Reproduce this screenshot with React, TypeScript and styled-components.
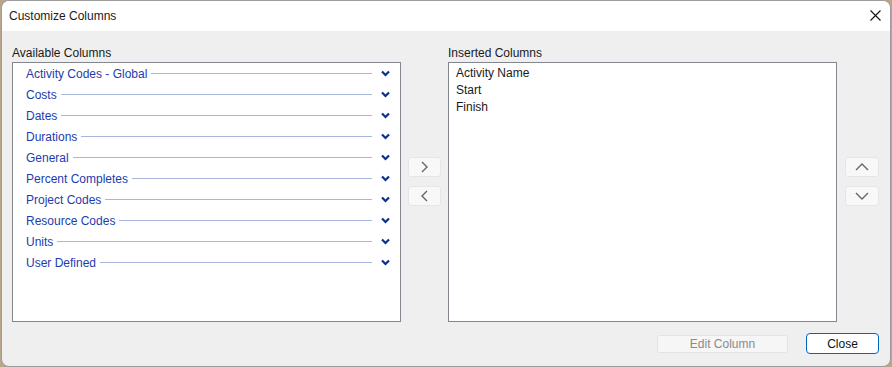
import styled, { createGlobalStyle } from "styled-components";

const GlobalStyle = createGlobalStyle`
  html, body {
    margin: 0;
    padding: 0;
    background: #b9a58c;
  }
  body {
    font-family: "Liberation Sans", Arial, sans-serif;
    font-size: 12px;
  }
`;

const groups = [
  "Activity Codes - Global",
  "Costs",
  "Dates",
  "Durations",
  "General",
  "Percent Completes",
  "Project Codes",
  "Resource Codes",
  "Units",
  "User Defined",
];

const inserted = ["Activity Name", "Start", "Finish"];

function GroupChevron() {
  return (
    <svg width="9" height="7" viewBox="0 0 9 7">
      <polyline points="1,1.5 4.5,5 8,1.5" fill="none" stroke="#0b2f8f" strokeWidth="2.2" />
    </svg>
  );
}

type Dir = "left" | "right" | "up" | "down";

function Arrow({ dir }: { dir: Dir }) {
  const pts: Record<Dir, string> = {
    right: "1,1 6,6 1,11",
    left: "6,1 1,6 6,11",
    up: "1,7 7,1 13,7",
    down: "1,1 7,7 13,1",
  };
  const wide = dir === "up" || dir === "down";
  return (
    <svg
      width={wide ? 14 : 7}
      height={wide ? 8 : 12}
      viewBox={wide ? "0 0 14 8" : "0 0 7 12"}
    >
      <polyline points={pts[dir]} fill="none" stroke="#666" strokeWidth="1.4" />
    </svg>
  );
}

export default function App() {
  return (
    <>
      <GlobalStyle />
      <Window>
        <TitleBar>
          <Title>Customize Columns</Title>
          <CloseX>
            <svg width="11" height="11" viewBox="0 0 11 11">
              <path d="M0.5 0.5 L10.5 10.5 M10.5 0.5 L0.5 10.5" stroke="#111" strokeWidth="1.1" />
            </svg>
          </CloseX>
        </TitleBar>
        <Body>
          <Main>
            <Label>Available Columns</Label>
            <span />
            <Label>Inserted Columns</Label>
            <span />
            <ListBox>
              {groups.map((g) => (
                <GroupRow key={g}>
                  <GroupName>{g}</GroupName>
                  <Rule />
                  <GroupChevron />
                </GroupRow>
              ))}
            </ListBox>
            <SideCol $inset={7}>
              <IconBtn $w={33}>
                <Arrow dir="right" />
              </IconBtn>
              <IconBtn $w={33}>
                <Arrow dir="left" />
              </IconBtn>
            </SideCol>
            <ListBox $top={2}>
              {inserted.map((c) => (
                <Item key={c}>{c}</Item>
              ))}
            </ListBox>
            <SideCol $inset={8}>
              <IconBtn $w={34}>
                <Arrow dir="up" />
              </IconBtn>
              <IconBtn $w={34}>
                <Arrow dir="down" />
              </IconBtn>
            </SideCol>
          </Main>
          <Footer>
            <EditButton disabled>Edit Column</EditButton>
            <CloseButton>Close</CloseButton>
          </Footer>
        </Body>
      </Window>
    </>
  );
}

const Window = styled.div`
  box-sizing: border-box;
  width: 890px;
  height: 367px;
  margin-left: 1px;
  border: 1px solid #9c9c9c;
  border-radius: 8px;
  overflow: hidden;
  background: #efefef;
  display: flex;
  flex-direction: column;
`;

const TitleBar = styled.div`
  height: 30px;
  flex-shrink: 0;
  background: #fff;
  display: flex;
  align-items: center;
  justify-content: space-between;
  padding: 0 9px 0 7px;
`;

const Title = styled.span`
  color: #1a1a1a;
  font-size: 12px;
`;

const CloseX = styled.div`
  display: flex;
  align-items: center;
  padding-bottom: 1px;
`;

const Body = styled.div`
  padding: 14px 11px 0 10px;
  display: flex;
  flex-direction: column;
`;

const Main = styled.div`
  display: grid;
  grid-template-columns: 389px 47px 389px 42px;
  grid-template-rows: 17px 260px;
`;

const Label = styled.div`
  color: #1a1a1a;
  line-height: 17px;
`;

const ListBox = styled.div<{ $top?: number }>`
  box-sizing: border-box;
  background: #fff;
  border: 1px solid #83868d;
  padding: ${(p) => p.$top ?? 0}px 10px 0 13px;
`;

const GroupRow = styled.div`
  height: 21px;
  display: flex;
  align-items: center;
  gap: 4px;
`;

const GroupName = styled.span`
  color: #1d3cae;
  white-space: nowrap;
`;

const Rule = styled.div`
  flex: 1;
  height: 1px;
  background: #a8b6db;
  margin-right: 5px;
`;

const Item = styled.div`
  height: 17px;
  line-height: 17px;
  margin-left: -6px;
  color: #1a1a1a;
`;

const SideCol = styled.div<{ $inset: number }>`
  display: flex;
  flex-direction: column;
  gap: 9px;
  padding: 95px 0 0 ${(p) => p.$inset}px;
`;

const IconBtn = styled.button<{ $w: number }>`
  box-sizing: border-box;
  width: ${(p) => p.$w}px;
  height: 20px;
  padding: 0;
  border: 1px solid #e6e6e6;
  border-radius: 3px;
  background: #f8f8f8;
  display: flex;
  align-items: center;
  justify-content: center;
`;

const Footer = styled.div`
  display: flex;
  justify-content: flex-end;
  align-items: center;
  gap: 18px;
  margin-top: 11px;
`;

const EditButton = styled.button`
  box-sizing: border-box;
  width: 131px;
  height: 18px;
  border: 1px solid #e3e3e3;
  border-radius: 3px;
  background: #f6f6f6;
  color: #8a8a8a;
  font-family: inherit;
  font-size: 12px;
  padding: 0;
`;

const CloseButton = styled.button`
  box-sizing: border-box;
  width: 73px;
  height: 21px;
  border: 1px solid #0067c0;
  border-radius: 4px;
  background: #fff;
  color: #111;
  font-family: inherit;
  font-size: 12px;
  padding: 0;
`;
